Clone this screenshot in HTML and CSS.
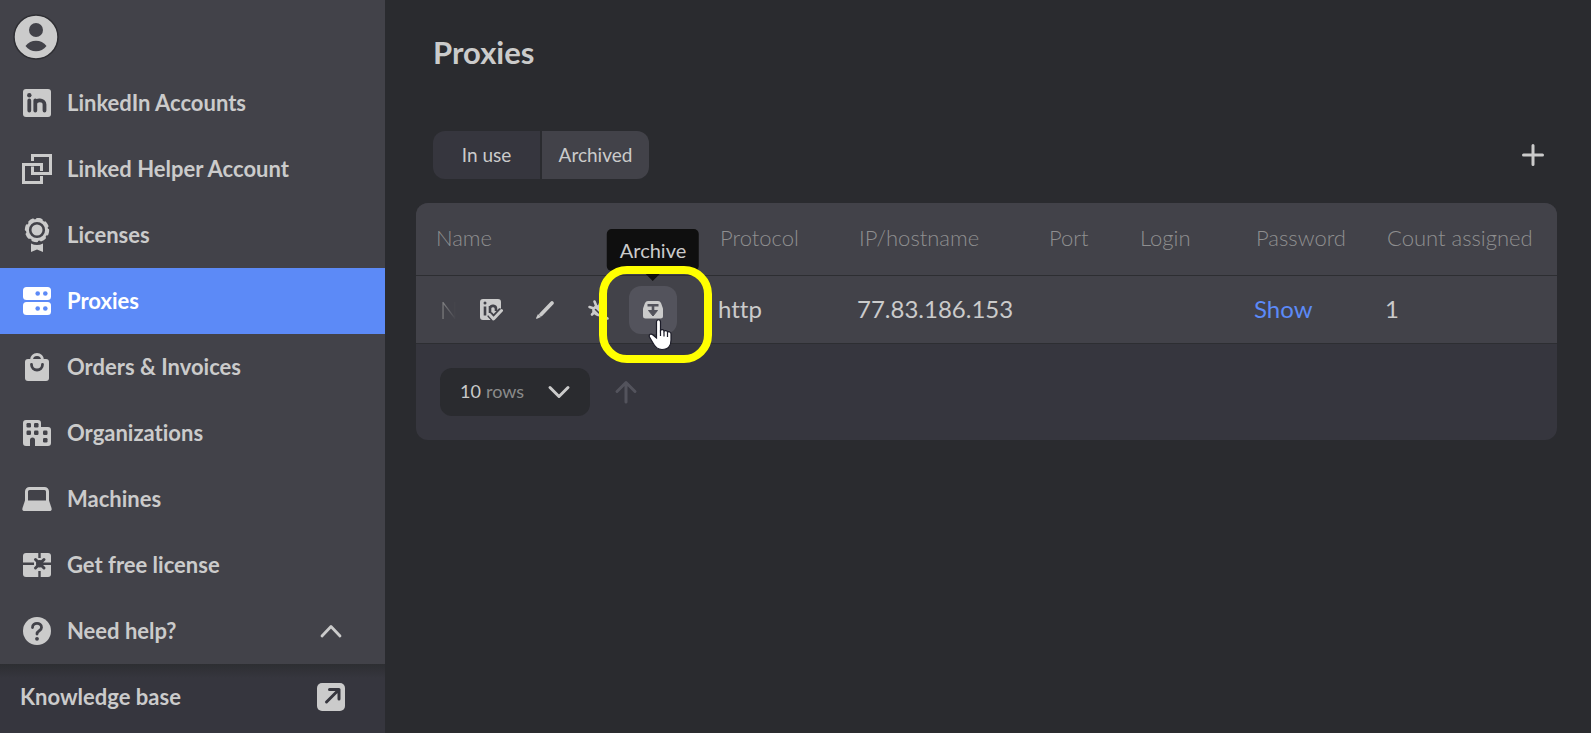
FILE: index.html
```html
<!DOCTYPE html>
<html lang="en">
<head>
    <meta charset="UTF-8">
    <meta name="viewport" content="width=device-width, initial-scale=1.0">
    <title>Proxies</title>
    <link rel="stylesheet" href="styles.css">
</head>
<body>
    <aside class="sidebar">
        <button type="button" class="avatar" aria-label="Profile">
            <svg width="46" height="46" viewBox="0 0 46 46">
                <circle cx="23" cy="23" r="22" fill="#cbcbcb" stroke="#2e2e33" stroke-width="1.5"/>
                <circle cx="23" cy="16" r="7" fill="#424249"/>
                <path d="M12.5 32c5-7 16-7 21 0-5 7-16 7-21 0z" fill="#424249"/>
            </svg>
        </button>
        <nav class="menu">
            <a href="#" class="menu-item">
                <svg class="icon" viewBox="0 0 34 34">
                    <rect x="3" y="3" width="28" height="28" rx="3" fill="currentColor"/>
                    <g fill="none" stroke="#424249" stroke-width="3.8" stroke-linecap="round">
                        <path d="M9.3 14.5v10M15.3 14.5v10M15.3 18c0-5 9.2-5 9.2.5v6"/>
                    </g>
                    <circle cx="9.3" cy="9.2" r="2.2" fill="#424249"/>
                </svg>
                <span>LinkedIn Accounts</span>
            </a>
            <a href="#" class="menu-item">
                <svg class="icon" viewBox="0 0 34 34" fill="none" stroke="currentColor" stroke-width="3">
                    <path d="M12.5 9V3.500h18v18H12.500v-7"/>
                    <path d="M21.500 19v-6.500H3.500v18h18v-6.500"/>
                </svg>
                <span>Linked Helper Account</span>
            </a>
            <a href="#" class="menu-item">
                <svg class="icon" viewBox="0 0 34 34">
                    <circle cx="17" cy="12" r="11" fill="currentColor"/>
                    <circle cx="17" cy="12" r="11" fill="none" stroke="currentColor" stroke-width="2.4" stroke-dasharray="4.3 4.34" stroke-linecap="round"/>
                    <circle cx="17" cy="12" r="6.8" fill="currentColor" stroke="#424249" stroke-width="2.6"/>
                    <path d="M11 25.5c4 2 8 2 12 0V34l-6-2.500L11 34z" fill="currentColor"/>
                </svg>
                <span>Licenses</span>
            </a>
            <a href="#" class="menu-item active">
                <svg class="icon" viewBox="0 0 34 34">
                    <rect x="3" y="3" width="28" height="13" rx="3.5" fill="currentColor"/>
                    <rect x="3" y="18" width="28" height="13" rx="3.5" fill="currentColor"/>
                    <g fill="#5c8af7">
                        <circle cx="17.7" cy="9.5" r="2.3"/>
                        <circle cx="25.3" cy="9.5" r="2.3"/>
                        <circle cx="17.7" cy="24.5" r="2.3"/>
                        <circle cx="25.3" cy="24.5" r="2.3"/>
                    </g>
                </svg>
                <span>Proxies</span>
            </a>
            <a href="#" class="menu-item">
                <svg class="icon" viewBox="0 0 34 34">
                    <rect x="5" y="9" width="24" height="22" rx="3" fill="currentColor"/>
                    <path d="M11.5 10a5.5 5.5 0 0 1 11 0" fill="none" stroke="currentColor" stroke-width="3"/>
                    <path d="M11.5 14.5a5.5 5.5 0 0 0 11 0" fill="none" stroke="#424249" stroke-width="2.8" stroke-linecap="round"/>
                </svg>
                <span>Orders &amp; Invoices</span>
            </a>
            <a href="#" class="menu-item">
                <svg class="icon" viewBox="0 0 34 34">
                    <path d="M6 4h12a3 3 0 0 1 3 3v4h7a3 3 0 0 1 3 3v13a3 3 0 0 1-3 3H15v-6a2.500 2.500 0 0 0-5 0v6H6a3 3 0 0 1-3-3V7a3 3 0 0 1 3-3z" fill="currentColor"/>
                    <g fill="#424249">
                        <rect x="6.5" y="7" width="4.5" height="4.5" rx="1.2"/>
                        <rect x="14" y="7" width="4.5" height="4.5" rx="1.2"/>
                        <rect x="6.5" y="14.5" width="4.5" height="4.5" rx="1.2"/>
                        <rect x="14" y="14.5" width="4.5" height="4.5" rx="1.2"/>
                        <rect x="23" y="14.5" width="4.5" height="4.5" rx="1.2"/>
                        <rect x="23" y="22" width="4.5" height="4.5" rx="1.2"/>
                    </g>
                </svg>
                <span>Organizations</span>
            </a>
            <a href="#" class="menu-item">
                <svg class="icon" viewBox="0 0 34 34">
                    <rect x="6.5" y="6.5" width="21" height="16" rx="3" fill="none" stroke="currentColor" stroke-width="3"/>
                    <path d="M5 18.500h24l2.500 7.500c.6 2-.2 3-2 3h-25c-1.800 0-2.600-1-2-3z" fill="currentColor"/>
                </svg>
                <span>Machines</span>
            </a>
            <a href="#" class="menu-item">
                <svg class="icon" viewBox="0 0 34 34">
                    <rect x="3" y="5" width="28" height="24" rx="3" fill="currentColor"/>
                    <g fill="none" stroke="#424249" stroke-width="2.4" stroke-linecap="round">
                        <path d="M3 15.8h11M23 15.8h8M19.5 5v5M19.5 23v6" stroke-linecap="butt"/>
                        <path d="M15.5 11.5l8.5 8.5M24 11.5L15.5 20" stroke-width="3"/>
                        <circle cx="19.7" cy="15.8" r="2.5" fill="#424249"/>
                    </g>
                </svg>
                <span>Get free license</span>
            </a>
            <a href="#" class="menu-item">
                <svg class="icon" viewBox="0 0 34 34">
                    <circle cx="17" cy="17" r="14" fill="currentColor"/>
                    <path d="M12.5 13.5c0-5.500 9-5.500 9 0 0 3.500-4.500 3-4.500 6.500" fill="none" stroke="#424249" stroke-width="2.8" stroke-linecap="round"/>
                    <circle cx="17" cy="24.8" r="1.9" fill="#424249"/>
                </svg>
                <span>Need help?</span>
                <svg class="icon trailing" viewBox="0 0 34 34" fill="none" stroke="currentColor" stroke-width="2.8" stroke-linecap="round" stroke-linejoin="round">
                    <path d="M8 22l9-9.500 9 9.500"/>
                </svg>
            </a>
        </nav>
        <div class="submenu">
            <a href="#" class="menu-item">
                <span>Knowledge base</span>
                <svg class="icon trailing" viewBox="0 0 34 34">
                    <rect x="3" y="3" width="28" height="28" rx="5" fill="currentColor"/>
                    <path d="M12.5 22L25 9.500M15.500 9.500H25V19" fill="none" stroke="#36363e" stroke-width="3" stroke-linecap="round" stroke-linejoin="round"/>
                </svg>
            </a>
        </div>
    </aside>

    <main class="content">
        <h1>Proxies</h1>
        <div class="toolbar">
            <div class="tabs">
                <button type="button">In use</button>
                <button type="button" class="selected">Archived</button>
            </div>
            <button type="button" class="icon-button" aria-label="Add proxy">
                <svg width="24" height="24" viewBox="0 0 24 24" fill="none" stroke="currentColor" stroke-width="3" stroke-linecap="round">
                    <path d="M12 2.500v19M2.500 12h19"/>
                </svg>
            </button>
        </div>

        <div class="panel">
            <table>
                <colgroup>
                    <col>
                    <col class="col-protocol">
                    <col class="col-host">
                    <col class="col-port">
                    <col class="col-login">
                    <col class="col-password">
                    <col class="col-count">
                </colgroup>
                <thead>
                    <tr>
                        <th>Name</th>
                        <th>Protocol</th>
                        <th>IP/hostname</th>
                        <th>Port</th>
                        <th>Login</th>
                        <th>Password</th>
                        <th>Count assigned</th>
                    </tr>
                </thead>
                <tbody>
                    <tr>
                        <td class="name-cell">
                            <div class="name-row">
                                <span class="name">N</span>
                                <div class="actions">
                                    <button type="button" class="icon-button" aria-label="Assign accounts">
                                        <svg width="24" height="24" viewBox="0 0 24 24">
                                            <path d="M4 1h15a3 3 0 0 1 3 3v6l-7 8-3-3-3.500 3.500L12 22H4a3 3 0 0 1-3-3V4a3 3 0 0 1 3-3z" fill="currentColor"/>
                                            <path d="M6 8.500v9M11 8v7M11 10c1-3 6-3 6 1v2" fill="none" stroke="#424249" stroke-width="2.6"/>
                                            <circle cx="6" cy="5" r="1.5" fill="#424249"/>
                                            <path d="M10.5 16l4 4.500 8-8.500" fill="none" stroke="#424249" stroke-width="6"/>
                                            <path d="M10.500 16.500l4 4.500L22.500 12.500" fill="none" stroke="currentColor" stroke-width="3" stroke-linecap="round" stroke-linejoin="round"/>
                                        </svg>
                                    </button>
                                    <button type="button" class="icon-button" aria-label="Edit">
                                        <svg width="24" height="24" viewBox="0 0 24 24">
                                            <path d="M8 16.500L19 5" stroke="currentColor" stroke-width="3.8" stroke-linecap="round"/>
                                            <path d="M5 16l3 3-4 1.800c-.7.2-1.100-.2-.9-.9z" fill="currentColor"/>
                                        </svg>
                                    </button>
                                    <button type="button" class="icon-button" aria-label="Test connection">
                                        <svg width="24" height="24" viewBox="0 0 24 24" fill="none" stroke="currentColor" stroke-width="2.6" stroke-linecap="round">
                                            <path d="M5.500 14.500c-1.500-4 2-8 6-7l7 8c-3 4-9 4-13-1z" fill="currentColor" stroke="none"/>
                                            <path d="M7.500 3.500l2 5M2.500 9l4.500 1.500M5 16.500l3-3M13.500 4.500l-1.500 4M11 14l9.500 6.500"/>
                                            <path d="M8.500 11.500l3.500 3.500" stroke="#424249" stroke-width="1.6"/>
                                        </svg>
                                    </button>
                                    <button type="button" class="icon-button hovered" aria-label="Archive">
                                        <svg width="24" height="24" viewBox="0 0 24 24">
                                            <path d="M7 3h10a3.500 3.500 0 0 1 3 2l2 5.500V18a2.500 2.500 0 0 1-2.500 2.500h-15A2.500 2.500 0 0 1 2 18v-7.500L4 5a3.500 3.500 0 0 1 3-2z" fill="currentColor"/>
                                            <path d="M6.500 7.200h11M12 8v6" stroke="#53535c" stroke-width="2.6"/>
                                            <path d="M7.500 12.500h9L12 18z" fill="#53535c" stroke="#53535c" stroke-linejoin="round"/>
                                        </svg>
                                        <span class="tooltip" role="tooltip">Archive</span>
                                        <span class="highlight"></span>
                                        <svg class="pointer" width="26" height="32" viewBox="0 0 26 32">
                                            <path d="M8.500 3c0-3 4-3 4 0v8.500c.8-1.400 3.300-1 3.500.8 1-1.200 3.200-.8 3.500.9 1.200-1 3.500-.3 3.500 1.800v6c0 5-2 9.500-9 9.500-5 0-7-2.500-9-6.500L1.500 18c-1-2.500 1.500-4 3.500-2l3.500 3z" fill="#fff" stroke="#1c1c28" stroke-width="1.2"/>
                                            <path d="M12.500 11v6M16 12.500v5M19.500 13.500v4.500" stroke="#1c1c28" stroke-width="1.2"/>
                                        </svg>
                                    </button>
                                </div>
                            </div>
                        </td>
                        <td>http</td>
                        <td>77.83.186.153</td>
                        <td></td>
                        <td></td>
                        <td><a href="#">Show</a></td>
                        <td>1</td>
                    </tr>
                </tbody>
            </table>
            <div class="panel-footer">
                <label class="page-size">
                    <select>
                        <option>10</option>
                        <option>25</option>
                        <option>50</option>
                    </select>
                    <span>rows</span>
                    <svg width="24" height="24" viewBox="0 0 24 24" fill="none" stroke="currentColor" stroke-width="3" stroke-linecap="round" stroke-linejoin="round">
                        <path d="M3 7.500l9 9 9-9"/>
                    </svg>
                </label>
                <button type="button" class="icon-button" aria-label="Scroll to top" disabled>
                    <svg width="24" height="24" viewBox="0 0 24 24" fill="none" stroke="currentColor" stroke-width="3" stroke-linecap="round" stroke-linejoin="round">
                        <path d="M12 22V2.500M3 11.500l9-9 9 9"/>
                    </svg>
                </button>
            </div>
        </div>
    </main>
</body>
</html>
```
FILE: styles.css
```css
* {
    box-sizing: border-box;
}
body {
    display: flex;
    min-height: 100vh;
    margin: 0;
    font-family: Lato, "Open Sans", sans-serif;
    font-size: 24px;
    font-variant-ligatures: none;
    color: #cbcbcb;
    background-color: #2a2b2f;
}
button, select {
    font-family: inherit;
    color: inherit;
    border: none;
    background: none;
    padding: 0;
    cursor: pointer;
}
svg {
    display: block;
    flex: none;
}

/* Sidebar */
.sidebar {
    display: flex;
    flex-direction: column;
    flex: none;
    width: 385px;
    background-color: #424249;
}
.avatar {
    align-self: flex-start;
    height: 70px;
    padding: 4px 13px 0;
}
.menu-item {
    display: flex;
    align-items: center;
    gap: 13px;
    height: 66px;
    padding: 0 37px 0 20px;
    font-size: 22px;
    font-weight: bold;
    color: #cbcbcb;
    text-decoration: none;
}
.menu-item span {
    padding-bottom: 2px;
}
.menu-item.active {
    color: #fff;
    background-color: #5c8af7;
}
.icon {
    width: 34px;
    height: 34px;
}
.trailing {
    margin-left: auto;
}
.submenu {
    flex: 1;
    background: linear-gradient(#2d2e32, #36363e 14px);
}

/* Content */
.content {
    flex: 1;
    min-width: 0;
    padding: 34px 34px 36px 31px;
}
h1 {
    margin: 0 17px;
    font-size: 31px;
    line-height: 36px;
}
.toolbar {
    display: flex;
    justify-content: space-between;
    margin: 61px 0 24px 17px;
}
.tabs {
    display: flex;
    gap: 2px;
    border-radius: 12px;
    overflow: hidden;
}
.tabs button {
    width: 107px;
    height: 48px;
    padding-bottom: 2px;
    font-size: 19px;
    background-color: #36363e;
}
.tabs .selected {
    background-color: #424249;
}
.icon-button {
    display: flex;
    align-items: center;
    justify-content: center;
    width: 48px;
    height: 48px;
    border-radius: 12px;
}
.icon-button:disabled {
    color: #53535c;
    cursor: default;
}

/* Table */
.panel {
    border-radius: 12px;
    background-color: #36363e;
}
table {
    width: 100%;
    table-layout: fixed;
    border-collapse: separate;
    border-spacing: 0;
    background-color: #424249;
    border-radius: 12px 12px 0 0;
}
.col-protocol {
    width: 139px;
}
.col-host {
    width: 190px;
}
.col-port {
    width: 91px;
}
.col-login {
    width: 116px;
}
.col-password {
    width: 131px;
}
.col-count {
    width: 190px;
}
th, td {
    padding: 0 0 2px 18px;
    text-align: left;
    white-space: nowrap;
    border-bottom: 1px solid #2d2e32;
}
th {
    height: 73px;
    padding-bottom: 3px;
    padding-left: 20px;
    font-size: 22px;
    font-weight: 300;
    color: #8f8f90;
}
td {
    height: 68px;
}
td a {
    color: #5c8af7;
    text-decoration: none;
}
.name-cell {
    padding: 0 0 0 24px;
}
.name-row {
    display: flex;
    align-items: center;
}
.name {
    width: 27px;
    overflow: hidden;
    font-weight: 300;
    color: #8f8f90;
    -webkit-mask-image: linear-gradient(to right, #000, transparent 16px);
    mask-image: linear-gradient(to right, #000, transparent 16px);
}
.actions {
    display: flex;
    gap: 6px;
}
.hovered {
    position: relative;
    background-color: #53535c;
}
.tooltip {
    position: absolute;
    bottom: 63px;
    left: 50%;
    transform: translateX(-50%);
    padding: 0 13px;
    font-size: 20px;
    line-height: 42px;
    border-radius: 5px;
    background-color: #0f0f0f;
}
.tooltip::after {
    content: "";
    position: absolute;
    top: 100%;
    left: 50%;
    margin-left: -10px;
    border: 10px solid transparent;
    border-bottom: none;
    border-top-color: #0f0f0f;
}
.highlight {
    position: absolute;
    inset: -20px -35px -29px -30px;
    border: 8px solid #ffff00;
    border-radius: 28px;
    pointer-events: none;
}
.pointer {
    position: absolute;
    top: 33px;
    left: 19px;
    pointer-events: none;
}

/* Pagination */
.panel-footer {
    display: flex;
    align-items: center;
    gap: 12px;
    padding: 24px;
}
.page-size {
    display: grid;
    grid-template-columns: 46px 1fr 24px;
    align-items: center;
    width: 150px;
    height: 48px;
    padding-right: 19px;
    font-size: 18px;
    border-radius: 12px;
    background-color: #2a2b2f;
}
.page-size select {
    grid-area: 1 / 1 / 2 / 4;
    height: 48px;
    padding: 0 0 2px 20px;
    font-size: 18px;
    appearance: none;
}
.page-size span {
    grid-area: 1 / 2;
    padding-bottom: 2px;
    color: #8b8b8b;
    pointer-events: none;
}
.page-size svg {
    grid-area: 1 / 3;
    pointer-events: none;
}
```
